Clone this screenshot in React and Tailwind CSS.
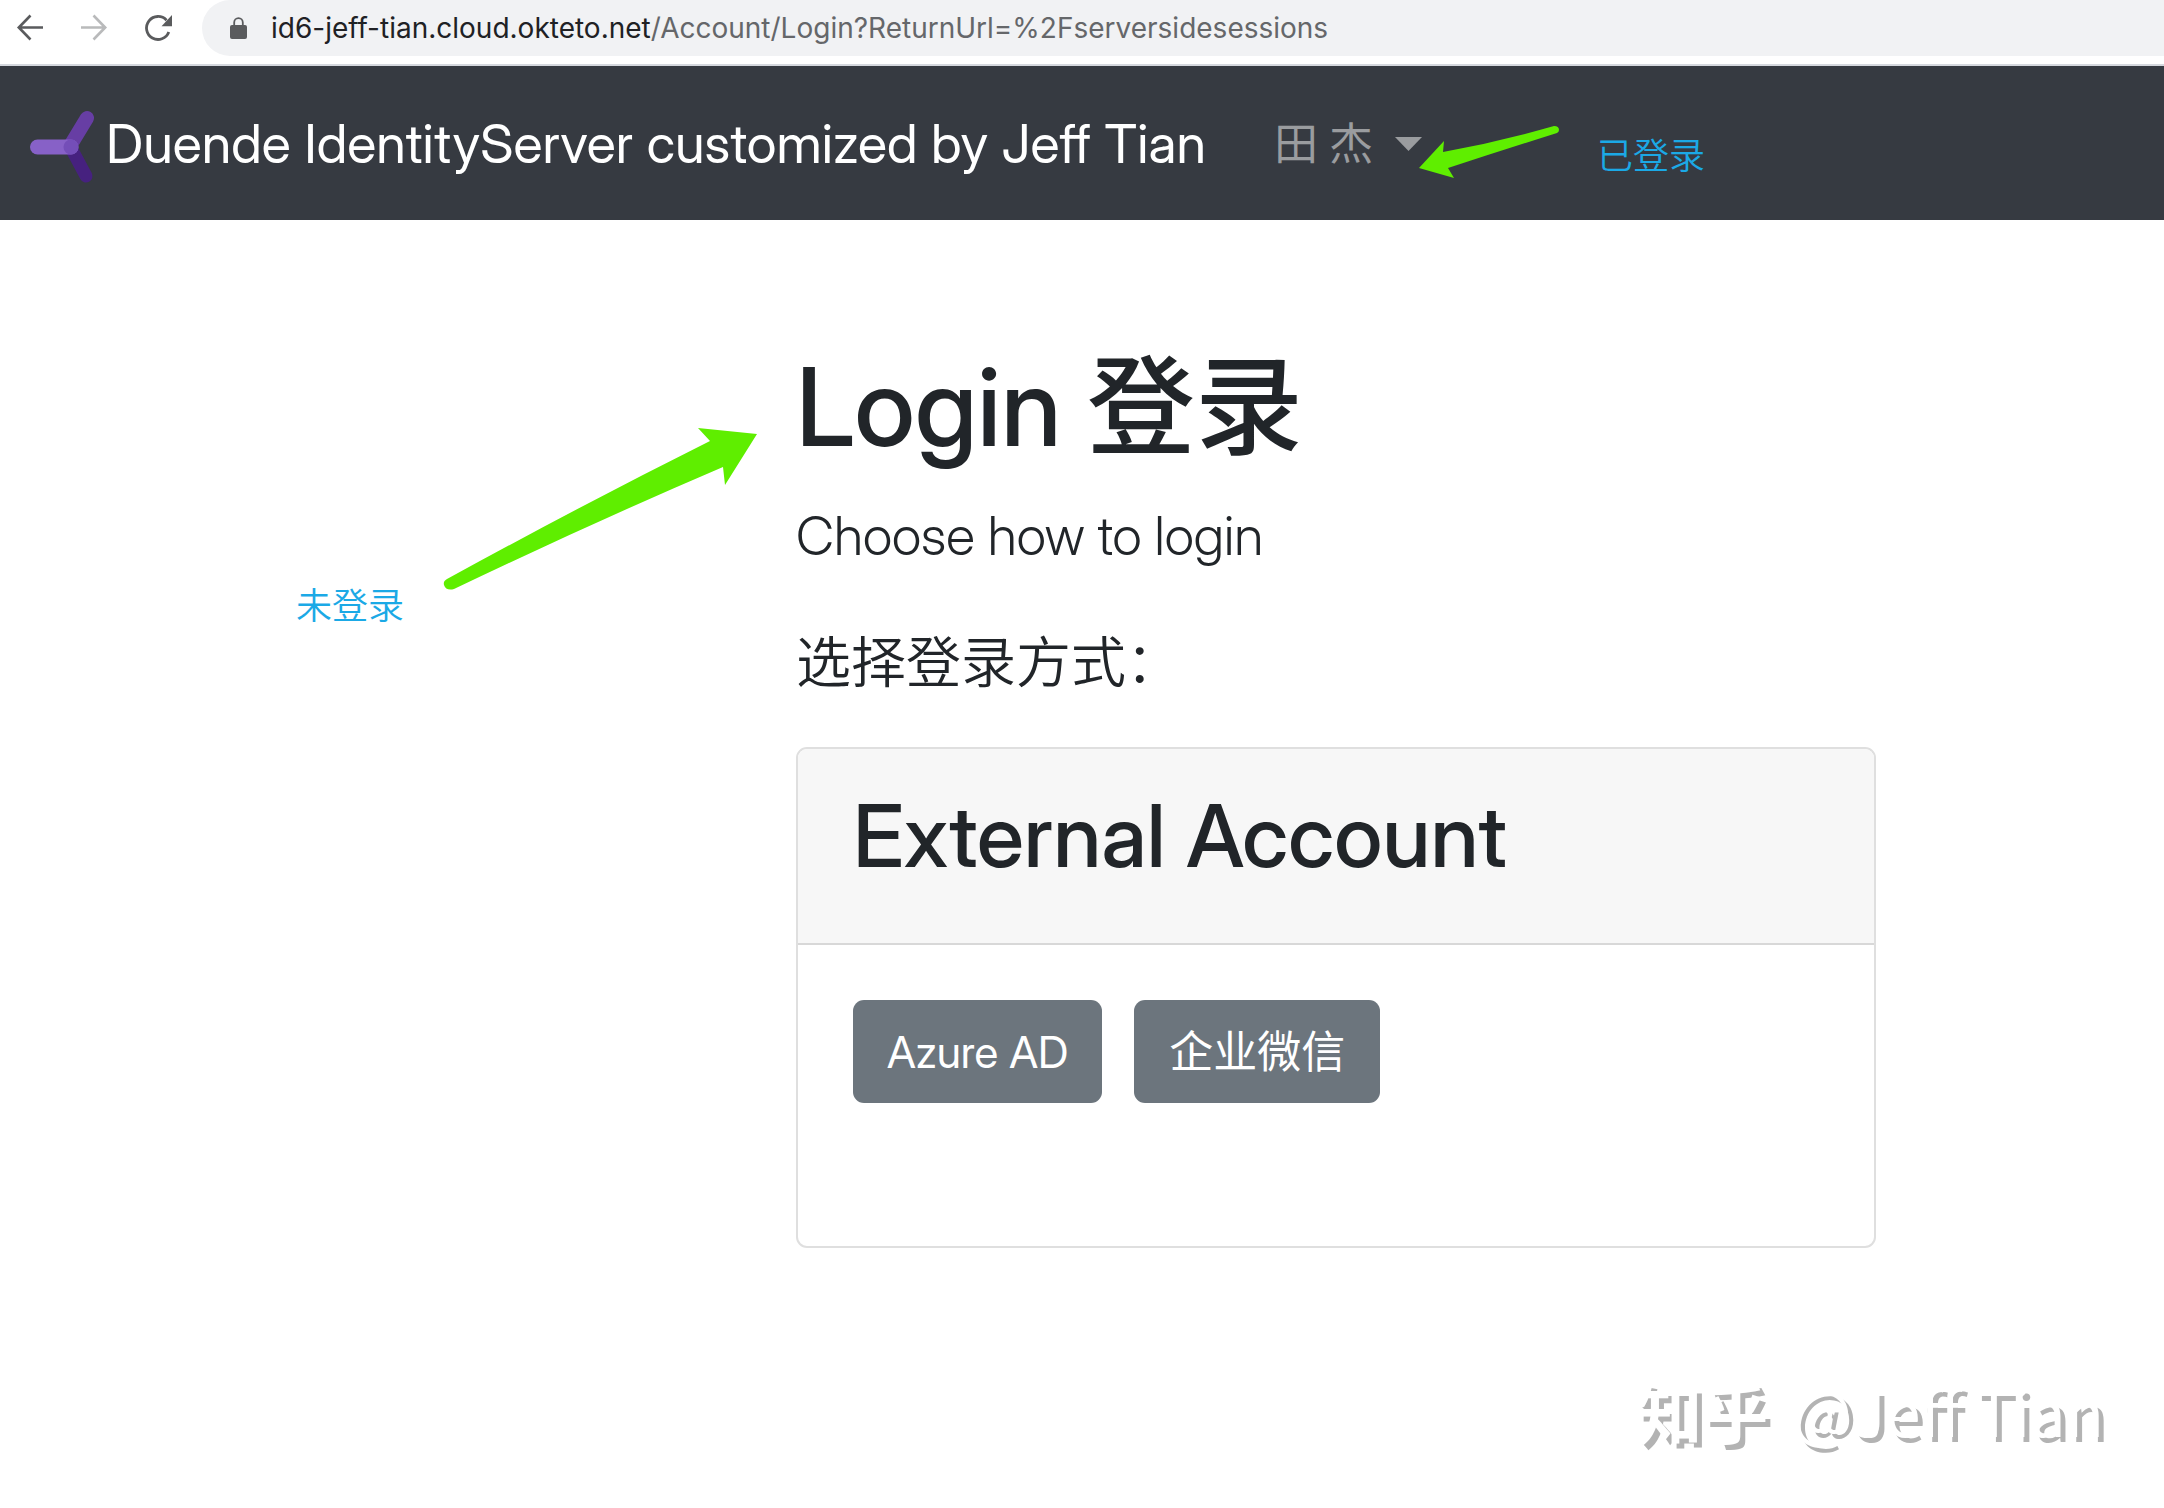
const UI = "font-['Inter_Display','Inter','Noto_Sans_CJK_SC',sans-serif]";

function BrowserBar() {
  return (
    <div className="flex h-[66px] items-start border-b-2 border-[#d5d8de] bg-white">
      <div className="flex h-14 w-[202px] shrink-0 items-center gap-9 pl-3">
        <button aria-label="Back" className="h-7 w-7">
          <svg viewBox="0 0 28 28" className="h-7 w-7 overflow-visible" fill="none" stroke="#5a5b5d" strokeWidth="2.6">
            <path d="M31 13.500H7M18.500 1.500 6.800 13.500l11.700 12" />
          </svg>
        </button>
        <button aria-label="Forward" className="h-7 w-7">
          <svg viewBox="0 0 28 28" className="h-7 w-7 overflow-visible" fill="none" stroke="#b9babb" strokeWidth="2.6">
            <path d="M5 13.500H29M17.500 1.500 29.200 13.500l-11.700 12" />
          </svg>
        </button>
        <button aria-label="Reload" className="h-7 w-7">
          <svg viewBox="0 0 28 28" className="h-7 w-7 overflow-visible" fill="none">
            <path d="M28.800 18A11.500 11.500 0 1 1 26.500 6.200" stroke="#5a5b5d" strokeWidth="2.8" />
            <path d="M32 1v11.200H21.500z" fill="#5a5b5d" />
          </svg>
        </button>
      </div>
      <div className="flex h-14 flex-1 items-center gap-6 rounded-l-full bg-[#f1f2f4] pl-7">
        <svg viewBox="0 0 17 22" className="h-[22px] w-[17px] shrink-0">
          <rect y="8" width="17" height="14" rx="2" fill="#5a5b5d" />
          <path d="M4.200 9V5.500a4.300 4.300 0 0 1 8.600 0V9" fill="none" stroke="#5a5b5d" strokeWidth="1.800" />
        </svg>
        <p className="whitespace-nowrap font-['Inter',sans-serif] text-[28px] leading-9 text-[#65676a]">
          <span className="text-[#202124]">id6-jeff-tian.cloud.okteto.net</span>
          /Account/Login?ReturnUrl=%2Fserversidesessions
        </p>
      </div>
    </div>
  );
}

function Logo() {
  return (
    <svg viewBox="0 -7 66 84" className="h-[84px] w-[66px] shrink-0" fill="none" strokeLinecap="round">
      <path d="M41 39 56 67" stroke="#46217f" strokeWidth="13" />
      <path d="M40 37 57 9" stroke="#673ea4" strokeWidth="14" />
      <path d="M7.500 38H41" stroke="#8761c7" strokeWidth="15" />
      <circle cx="41" cy="38" r="7.5" fill="#744eb8" />
    </svg>
  );
}

function NavBar() {
  return (
    <nav className="relative flex h-[154px] items-center bg-[#363a41] pl-[30px] pt-0.5">
      <a href="#" className="flex items-center gap-[10px]">
        <Logo />
        <span className={`${UI} whitespace-nowrap text-[54px] leading-[80px] text-white`}>
          Duende IdentityServer customized by Jeff Tian
        </span>
      </a>
      <button className={`${UI} ml-[68px] flex items-center gap-[22px] whitespace-nowrap text-[44px] leading-[66px] text-[#9a9c9f]`}>
        田 杰
        <svg viewBox="0 0 27 14" className="h-[14px] w-[27px]" fill="#9a9c9f">
          <path d="M0 0h27L13.500 14z" />
        </svg>
      </button>
      <svg viewBox="0 0 142 54" className="absolute left-[1418px] top-[60px] h-[54px] w-[142px]" fill="#5fee00">
        <path d="M1 42 26 15 25 26Q80 16 136 0Q141 0 141 4Q141 6 139 7Q82 25 30 42L36 52Z" />
      </svg>
      <span className="absolute left-[1597px] top-[60px] font-['Noto_Sans_CJK_SC',sans-serif] text-[36px] font-[350] leading-[54px] text-[#1ba9e6]">
        已登录
      </span>
    </nav>
  );
}

export default function App() {
  return (
    <div className="relative min-h-screen overflow-hidden bg-white text-[#212529]">
      <BrowserBar />
      <NavBar />
      <main className={`${UI} grid grid-cols-[796fr_1080fr_288fr] pt-[121px]`}>
        <section className="col-start-2 min-w-0">
          <h1 className="whitespace-nowrap text-[108px] font-medium leading-[132px]">Login 登录</h1>
          <p className="mt-[22px] text-[54px] font-[350] leading-[82px]">Choose how to login</p>
          <p className="mt-11 text-[55px] font-[350] leading-[82px]">选择登录方式：</p>
          <div className="mt-11 overflow-hidden rounded-[11px] border-2 border-[#dfdfdf]">
            <div className="border-b-2 border-[#d8d8d8] bg-[#f7f7f7] px-[55px] pb-[53px] pt-[33px]">
              <h2 className="whitespace-nowrap text-[86px] font-medium leading-[108px]">External Account</h2>
            </div>
            <div className="flex gap-8 px-[55px] pb-[143px] pt-[55px]">
              <button className="h-[103px] rounded-[11px] bg-[#6c757d] px-[34px] text-[44px] text-white">Azure AD</button>
              <button className="h-[103px] rounded-[11px] bg-[#6c757d] px-[35px] text-[44px] text-white">企业微信</button>
            </div>
          </div>
        </section>
      </main>
      <svg viewBox="0 0 316 164" className="absolute left-[442px] top-[426px] h-[164px] w-[316px]" fill="#5fee00">
        <path d="M315 8 256 2 268 15Q140 79 5 153Q1 155 2 159Q4 165 12 163Q150 97 281 41L283 59Z" />
      </svg>
      <span className="absolute left-[296px] top-[576px] font-['Noto_Sans_CJK_SC',sans-serif] text-[36px] font-[350] leading-[54px] text-[#1ba9e6]">
        未登录
      </span>
      <div className="absolute right-[60px] top-[1365px] flex items-center gap-6 whitespace-nowrap font-['Noto_Sans_CJK_SC',sans-serif] leading-[90px] text-white [text-shadow:5px_5px_0_#b3b3b3]">
        <span className="text-[66px] font-bold">知乎</span>
        <span className="text-[63px]">@Jeff Tian</span>
      </div>
    </div>
  );
}
